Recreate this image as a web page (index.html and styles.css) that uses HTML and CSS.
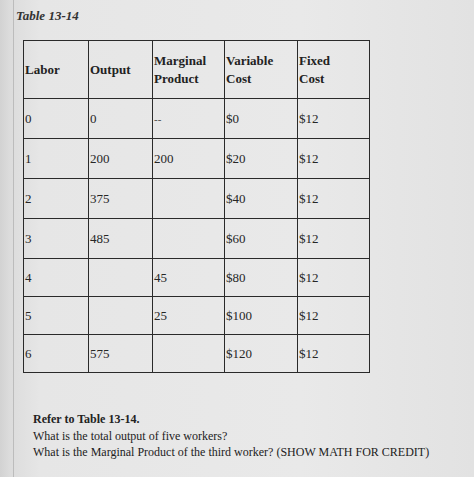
FILE: index.html
```html
<!DOCTYPE html>
<html>
<head>
<meta charset="utf-8">
<link rel="stylesheet" href="styles.css">
</head>
<body>
<div class="page">
  <div class="title">Table 13-14</div>
  <table class="tbl">
    <thead>
      <tr class="head">
        <th class="c1">Labor</th>
        <th class="c2">Output</th>
        <th class="c3">Marginal<br>Product</th>
        <th class="c4">Variable<br>Cost</th>
        <th class="c5">Fixed<br>Cost</th>
      </tr>
    </thead>
    <tbody>
      <tr><td>0</td><td>0</td><td class="dash">--</td><td>$0</td><td>$12</td></tr>
      <tr><td>1</td><td>200</td><td>200</td><td>$20</td><td>$12</td></tr>
      <tr><td>2</td><td>375</td><td></td><td>$40</td><td>$12</td></tr>
      <tr><td>3</td><td>485</td><td></td><td>$60</td><td>$12</td></tr>
      <tr class="short"><td>4</td><td></td><td>45</td><td>$80</td><td>$12</td></tr>
      <tr class="short"><td>5</td><td></td><td>25</td><td>$100</td><td>$12</td></tr>
      <tr class="short"><td>6</td><td>575</td><td></td><td>$120</td><td>$12</td></tr>
    </tbody>
  </table>
  <div class="questions">
    <p class="q-head">Refer to Table 13-14.</p>
    <p>What is the total output of five workers?</p>
    <p>What is the Marginal Product of the third worker? (SHOW MATH FOR CREDIT)</p>
  </div>
</div>
</body>
</html>
```
FILE: styles.css
```css
html, body {
  margin: 0;
  padding: 0;
}
body {
  width: 474px;
  height: 477px;
  overflow: hidden;
  background: linear-gradient(90deg, #d2d2d2 0px, #dcdcdc 10px, #e6e6e6 40px, #e9e9e9 300px, #e2e2e2 474px);
  font-family: "Liberation Serif", "Times New Roman", serif;
  color: #1e1e1e;
}
.page {
  height: 477px;
  box-sizing: border-box;
  margin-left: 13px;
  border-left: 1px solid #bcbcbc;
  padding-top: 8px;
}
.title {
  font-style: italic;
  font-weight: bold;
  font-size: 13px;
  color: #333;
  padding-left: 2px;
  height: 32px;
}
.tbl {
  margin-left: 9px;
  border-collapse: collapse;
  border: 1px solid #6a6a6a;
}
.tbl th, .tbl td {
  border: 1.5px solid #2a2a2a;
  padding: 0 0 0 1px;
  text-align: left;
  vertical-align: middle;
  font-size: 13px;
  line-height: 18px;
}
.tbl th {
  font-weight: bold;
  font-size: 13px;
  height: 57px;
  color: #222;
}
.tbl td {
  height: 39px;
  color: #262626;
}
.tbl tr.short td {
  height: 37px;
}
.c1 { width: 63px; }
.c2 { width: 62px; }
.c3 { width: 70px; }
.c4 { width: 71px; }
.c5 { width: 70px; }
.tbl td.dash {
  font-size: 11px;
  color: #444;
}
.questions {
  margin-top: 38px;
  padding-left: 19px;
  font-size: 12px;
  color: #222;
}
.questions p {
  margin: 0;
  line-height: 16.5px;
}
.questions .q-head {
  font-weight: bold;
}
```
